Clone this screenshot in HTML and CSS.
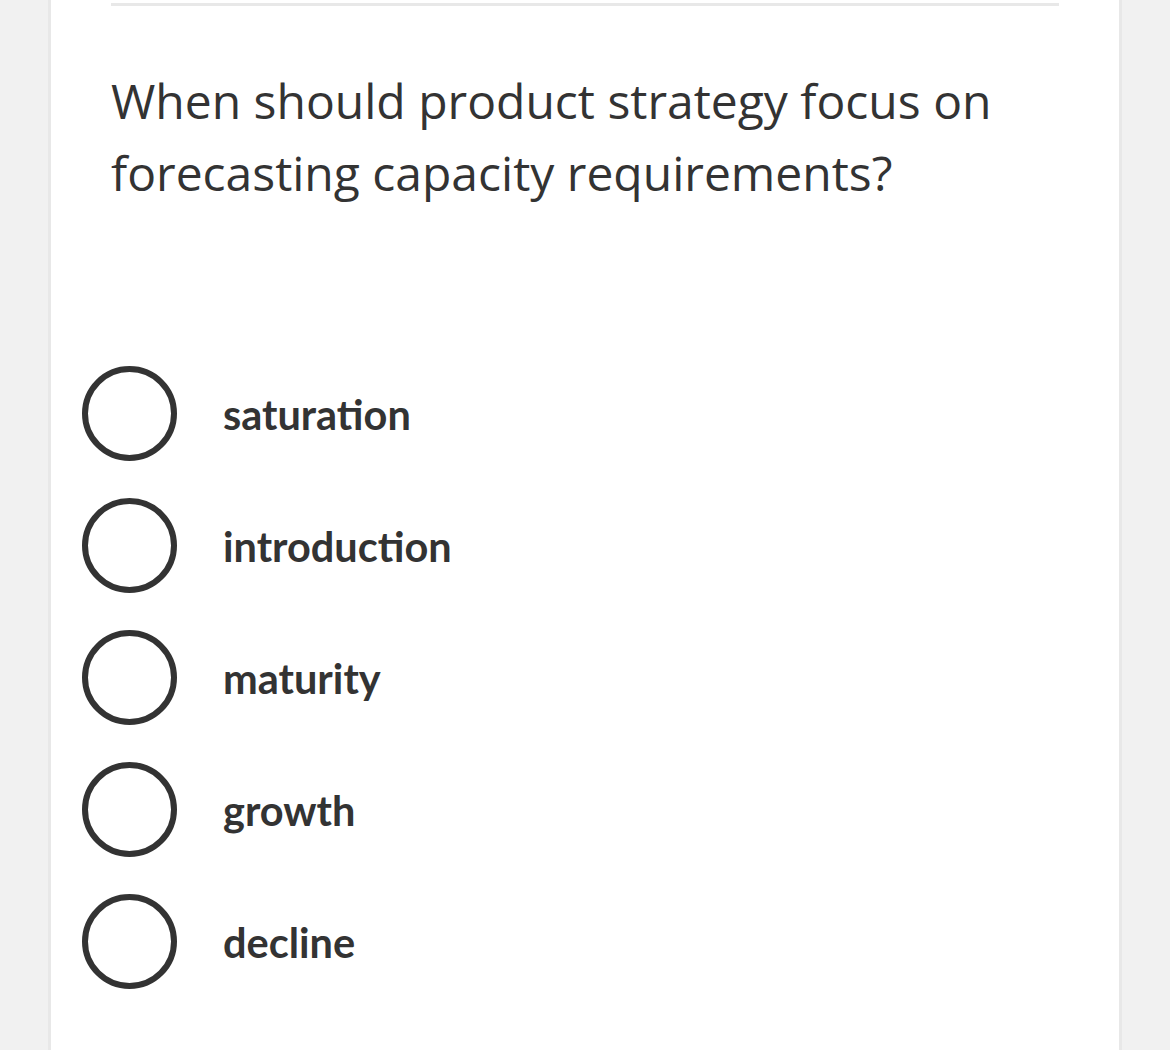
FILE: index.html
```html
<!DOCTYPE html>
<html>
<head>
<meta charset="utf-8">
<link rel="stylesheet" href="styles.css">
</head>
<body>
<div class="card">
  <div class="rule"></div>
  <h1 class="question">When should product strategy focus on forecasting capacity requirements?</h1>
  <ul class="options">
    <li class="option"><span class="radio"></span><span class="label">saturation</span></li>
    <li class="option"><span class="radio"></span><span class="label">introduction</span></li>
    <li class="option"><span class="radio"></span><span class="label">maturity</span></li>
    <li class="option"><span class="radio"></span><span class="label">growth</span></li>
    <li class="option"><span class="radio"></span><span class="label">decline</span></li>
  </ul>
</div>
</body>
</html>
```

FILE: styles.css
```css
html, body {
  margin: 0;
  padding: 0;
  background: #f1f1f1;
  height: 100%;
}
.card {
  margin-left: 48px;
  width: 1068px;
  min-height: 1050px;
  background: #ffffff;
  border-left: 3px solid #e8e8e8;
  border-right: 3px solid #e8e8e8;
  box-sizing: content-box;
  padding-top: 3px;
}
.rule {
  margin: 0 60px;
  border-top: 3px solid #e8e8e8;
}
.question {
  margin: 59px 60px 0 60px;
  font-family: "Open Sans", sans-serif;
  font-weight: 400;
  font-size: 48px;
  line-height: 72px;
  color: #333333;
}
.options {
  list-style: none;
  margin: 157px 0 0 31px;
  padding: 0;
  display: flex;
  flex-direction: column;
  gap: 37px;
}
.option {
  display: flex;
  align-items: center;
  height: 95px;
}
.radio {
  width: 95px;
  height: 95px;
  box-sizing: border-box;
  border: 6px solid #333333;
  border-radius: 50%;
  flex: none;
}
.label {
  margin-left: 46px;
  padding-top: 0;
  font-family: "Lato", sans-serif;
  font-weight: 700;
  font-size: 41.5px;
  color: #333333;
}
```
